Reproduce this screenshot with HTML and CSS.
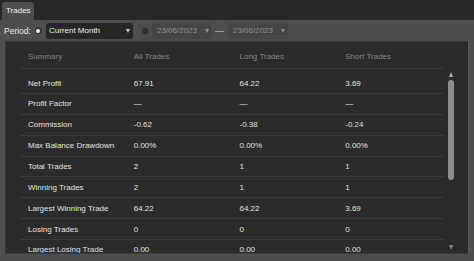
FILE: index.html
```html
<!DOCTYPE html>
<html lang="en">
<head>
  <meta charset="UTF-8" />
  <title>Trades</title>
  <link rel="stylesheet" href="styles.css">
</head>
<body>
  <div class="tabs">
    <div class="tab">Trades</div>
  </div>
  <div class="pane">
    <div class="toolbar">
      <span class="label">Period:</span>
      <span class="radio checked"></span>
      <div class="select">Current Month<span class="caret"></span></div>
      <span class="radio"></span>
      <div class="date">23/06/2023<span class="caret"></span></div>
      <span class="dash">—</span>
      <div class="date">23/06/2023<span class="caret"></span></div>
    </div>
    <div class="report">
      <div class="table-wrap">
        <table>
          <thead>
            <tr><th>Summary</th><th>All Trades</th><th>Long Trades</th><th>Short Trades</th></tr>
          </thead>
          <tbody>
            <tr><td>Net Profit</td><td>67.91</td><td>64.22</td><td>3.69</td></tr>
            <tr><td>Profit Factor</td><td>—</td><td>—</td><td>—</td></tr>
            <tr><td>Commission</td><td>-0.62</td><td>-0.38</td><td>-0.24</td></tr>
            <tr><td>Max Balance Drawdown</td><td>0.00%</td><td>0.00%</td><td>0.00%</td></tr>
            <tr><td>Total Trades</td><td>2</td><td>1</td><td>1</td></tr>
            <tr><td>Winning Trades</td><td>2</td><td>1</td><td>1</td></tr>
            <tr><td>Largest Winning Trade</td><td>64.22</td><td>64.22</td><td>3.69</td></tr>
            <tr><td>Losing Trades</td><td>0</td><td>0</td><td>0</td></tr>
            <tr><td>Largest Losing Trade</td><td>0.00</td><td>0.00</td><td>0.00</td></tr>
          </tbody>
        </table>
      </div>
      <div class="scrollbar">
        <span class="arrow up"></span>
        <div class="thumb"></div>
        <span class="arrow down"></span>
      </div>
    </div>
  </div>
</body>
</html>
```

FILE: styles.css
```css
body {
  margin: 0;
  width: 474px;
  height: 261px;
  overflow: hidden;
  background: #282828;
  font-family: 'Liberation Sans', Arial, sans-serif;
  font-size: 8px;
  color: #e6e6e6;
}
.tabs {
  height: 20px;
  display: flex;
  align-items: flex-end;
  padding-left: 2px;
}
.tab {
  height: 18px;
  width: 32px;
  box-sizing: border-box;
  padding-left: 4px;
  line-height: 17px;
  background: #4e4e4e;
  border-radius: 3px 3px 0 0;
  color: #eeeeee;
}
.pane {
  height: 241px;
  background: #4e4e4e;
}
.toolbar {
  height: 21px;
  display: flex;
  align-items: center;
  padding-left: 4px;
  font-size: 8.5px;
}
.label {
  color: #e8e8e8;
}
.radio {
  width: 8px;
  height: 8px;
  box-sizing: border-box;
  border-radius: 50%;
  background: #2c2c2c;
  border: 1px solid #444;
  margin-left: 8px;
  display: flex;
  align-items: center;
  justify-content: center;
}
.radio.checked {
  margin-left: 4px;
  width: 7px;
  height: 7px;
  background: #353535;
  border: none;
}
.radio.checked::after {
  content: "";
  width: 4px;
  height: 4px;
  border-radius: 50%;
  background: #f2f2f2;
}
.select,
.date {
  height: 16px;
  box-sizing: border-box;
  border-radius: 3px;
  display: flex;
  align-items: center;
  justify-content: space-between;
  font-size: 8px;
}
.select {
  width: 87px;
  margin-left: 4px;
  padding: 0 3px 0 3px;
  background: #272727;
  color: #eeeeee;
}
.date {
  width: 60px;
  margin-left: 3px;
  padding: 0 3px 0 5px;
  background: #464646;
  color: #8e8e8e;
}
.caret {
  width: 0;
  height: 0;
  border-left: 2.5px solid transparent;
  border-right: 2.5px solid transparent;
  border-top: 4px solid #c8c8c8;
}
.date .caret {
  border-top-color: #8a8a8a;
}
.dash {
  margin-left: 3px;
  margin-right: 1px;
  color: #cfcfcf;
  font-size: 9px;
}
.report {
  height: 213px;
  margin: 0 5px;
  box-sizing: border-box;
  border: 1px solid #3a3a3a;
  border-right-color: #5a5a5a;
  background: #2b2b2b;
  display: flex;
  overflow: hidden;
}
.table-wrap {
  flex: 0 0 423px;
  margin-left: 14px;
  padding-top: 2px;
}
table {
  width: 100%;
  border-collapse: collapse;
  table-layout: fixed;
}
th,
td {
  padding: 0 0 0 8px;
  text-align: left;
  white-space: nowrap;
  border-bottom: 1px solid #3c3c3c;
}
th {
  height: 24px;
  font-weight: normal;
  color: #858585;
}
td {
  height: 19.86px;
  color: #e2e2e2;
}
tbody tr:first-child td {
  height: 20px;
  padding-top: 4px;
}
.scrollbar {
  width: 16px;
  display: flex;
  flex-direction: column;
  align-items: center;
  padding: 30px 0 3px;
  box-sizing: border-box;
}
.arrow {
  width: 0;
  height: 0;
  border-left: 2.5px solid transparent;
  border-right: 2.5px solid transparent;
}
.arrow.up {
  border-bottom: 5px solid #b0b0b0;
}
.arrow.down {
  margin-top: auto;
  border-top: 5px solid #8a8a8a;
}
.thumb {
  width: 6px;
  height: 100px;
  margin-top: 3px;
  border-radius: 3px;
  background: #8c8c8c;
}
```
